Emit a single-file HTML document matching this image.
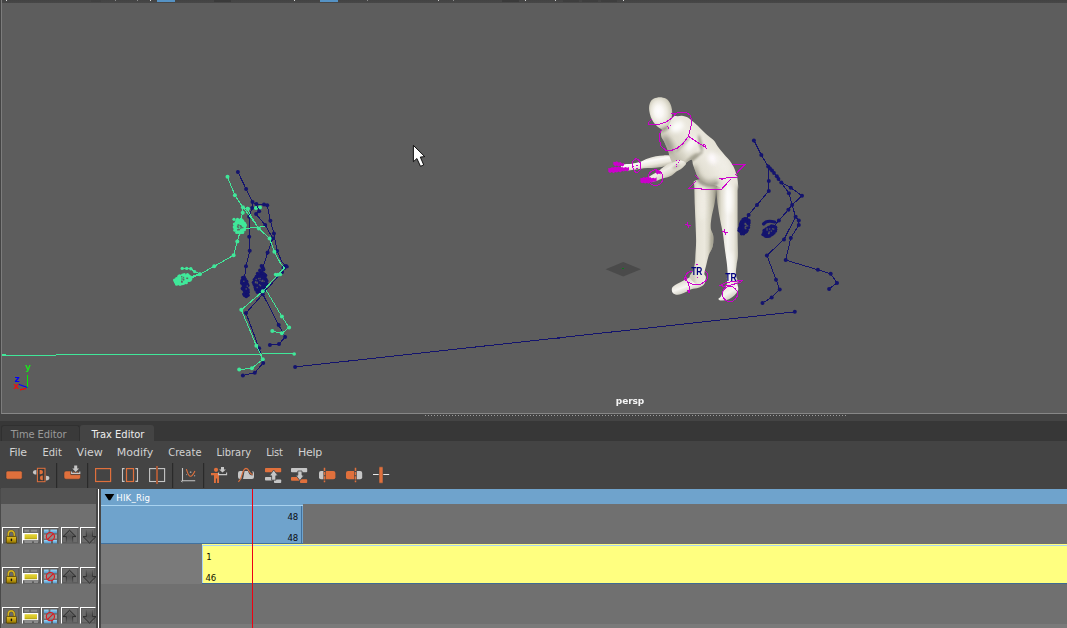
<!DOCTYPE html>
<html>
<head>
<meta charset="utf-8">
<title>Maya - Trax Editor</title>
<style>
html,body{margin:0;padding:0;background:#444;}
body{width:1067px;height:628px;position:relative;overflow:hidden;font-family:"DejaVu Sans Condensed","DejaVu Sans","Liberation Sans",sans-serif;}
.abs{position:absolute;}
#viewport{left:1px;top:0;width:1066px;height:414px;box-sizing:border-box;border-left:1px solid #7c7c7c;border-bottom:1px solid #878787;background:#5d5d5d;}
#vp-top{left:2px;top:0;width:1065px;height:3px;background:linear-gradient(#434343,#474747);}
#scene{left:0;top:0;opacity:0.999;}
#persp{left:616px;top:394px;font:bold 9px "DejaVu Sans","Liberation Sans",sans-serif;color:#fff;line-height:12px;text-shadow:0 0 1px #555;white-space:nowrap;}
#gap{left:0;top:414px;width:1067px;height:7px;background:#444;}
#handle{left:425px;top:415px;width:423px;height:1px;background:repeating-linear-gradient(90deg,#9c9c9c 0 1px,transparent 1px 3px);}
#tabbar{left:0;top:421px;width:1067px;height:20px;background:#373737;}
.tab{top:425px;height:16px;border-radius:3px 3px 0 0;}
.tt{font-size:11px;line-height:13px;white-space:nowrap;}
#tab1{left:1px;width:79px;background:#3a3a3a;border:1px solid #303030;border-bottom:none;box-sizing:border-box;}
#tab2{left:80px;width:74px;background:#444;}
#menubar{left:0;top:441px;width:1067px;height:21px;background:#444;}
.mi{top:445px;font-size:11px;line-height:13px;color:#d6d6d6;white-space:nowrap;}
#toolbar{left:0;top:462px;width:1067px;height:27px;background:#444;}
#trax{left:0;top:489px;width:1067px;height:139px;background:#707070;}
.t9{font-size:9px;line-height:11px;white-space:nowrap;font-family:"DejaVu Sans","Liberation Sans",sans-serif;}
.btn{height:17px;box-sizing:border-box;background:#6b6b6b;border-top:1px solid #fff;border-left:1px solid #fff;border-right:1px solid #646464;border-bottom:1px solid #646464;box-shadow:inset 0 0 0 1px #5c5c5c;}
</style>
</head>
<body>
<div id="viewport" class="abs"></div>
<div id="vp-top" class="abs"></div>
<div class="abs" style="left:157px;top:0;width:18px;height:2px;background:#5592c4"></div><div class="abs" style="left:320px;top:0;width:18px;height:2px;background:#5592c4"></div><div class="abs" style="left:91px;top:0;width:10px;height:2px;background:#404040"></div><div class="abs" style="left:214px;top:0;width:17px;height:2px;background:#3a3a3a"></div><div class="abs" style="left:502px;top:0;width:17px;height:2px;background:#3a3a3a"></div><div class="abs" style="left:563px;top:0;width:16px;height:2px;background:#3e3e3e"></div><div class="abs" style="left:582px;top:0;width:16px;height:2px;background:#3e3e3e"></div><div class="abs" style="left:601px;top:0;width:16px;height:2px;background:#3e3e3e"></div><div class="abs" style="left:6px;top:0;width:1px;height:1px;background:#e0e0e0"></div><div class="abs" style="left:115px;top:0;width:1px;height:1px;background:#8a8a8a"></div><div class="abs" style="left:137px;top:0;width:1px;height:1px;background:#8a8a8a"></div><div class="abs" style="left:150px;top:0;width:1px;height:1px;background:#d8d8d8"></div><div class="abs" style="left:294px;top:0;width:1px;height:1px;background:#d8d8d8"></div><div class="abs" style="left:367px;top:0;width:1px;height:1px;background:#8a8a8a"></div><div class="abs" style="left:438px;top:0;width:1px;height:1px;background:#c8c8c8"></div><div class="abs" style="left:453px;top:0;width:1px;height:1px;background:#8a8a8a"></div><div class="abs" style="left:525px;top:0;width:1px;height:1px;background:#d0d0d0"></div><div class="abs" style="left:555px;top:0;width:1px;height:1px;background:#c8c8c8"></div><div class="abs" style="left:623px;top:0;width:1px;height:1px;background:#d8d8d8"></div>
<svg id="scene" class="abs" width="1067" height="413" viewBox="0 0 1067 413">

<defs>
<radialGradient id="gHead" gradientUnits="userSpaceOnUse" cx="0" cy="0" r="1" fx="-0.12" fy="-0.08" gradientTransform="translate(660,112.5) rotate(-6) scale(13.5,19)">
<stop offset="0" stop-color="#fffdff"/><stop offset="0.3" stop-color="#faf8f5"/><stop offset="0.58" stop-color="#ebe8de"/><stop offset="0.82" stop-color="#d4d1c2"/><stop offset="1" stop-color="#b0ad9d"/>
</radialGradient>
<linearGradient id="gTorso" gradientUnits="userSpaceOnUse" x1="684" y1="168" x2="724" y2="136">
<stop offset="0" stop-color="#c4c1b1"/><stop offset="0.2" stop-color="#e0ddd0"/><stop offset="0.5" stop-color="#eeebe2"/><stop offset="0.8" stop-color="#e4e1d5"/><stop offset="1" stop-color="#c2bfaf"/>
</linearGradient>
<linearGradient id="gLegL" gradientUnits="userSpaceOnUse" x1="694" y1="0" x2="715" y2="0">
<stop offset="0" stop-color="#cfccbd"/><stop offset="0.15" stop-color="#e6e3d7"/><stop offset="0.5" stop-color="#ebe8dd"/><stop offset="0.72" stop-color="#d6d3c4"/><stop offset="1" stop-color="#a9a695"/>
</linearGradient>
<linearGradient id="gLegR" gradientUnits="userSpaceOnUse" x1="717" y1="0" x2="738.5" y2="0">
<stop offset="0" stop-color="#b4b1a0"/><stop offset="0.22" stop-color="#e2dfd2"/><stop offset="0.5" stop-color="#f7f5f2"/><stop offset="0.78" stop-color="#e9e6db"/><stop offset="1" stop-color="#c4c1b1"/>
</linearGradient>
<linearGradient id="gArm1" gradientUnits="userSpaceOnUse" x1="654" y1="155" x2="656.5" y2="168.5">
<stop offset="0" stop-color="#d4d1c2"/><stop offset="0.35" stop-color="#fbfaf8"/><stop offset="0.65" stop-color="#ece9df"/><stop offset="1" stop-color="#b1ae9d"/>
</linearGradient>
<linearGradient id="gArm2" gradientUnits="userSpaceOnUse" x1="662" y1="166" x2="669" y2="179">
<stop offset="0" stop-color="#d8d5c7"/><stop offset="0.35" stop-color="#f1efe7"/><stop offset="0.7" stop-color="#dbd8ca"/><stop offset="1" stop-color="#a9a695"/>
</linearGradient>
<linearGradient id="gUArm" gradientUnits="userSpaceOnUse" x1="668" y1="148" x2="694" y2="156">
<stop offset="0" stop-color="#d9d6c8"/><stop offset="0.3" stop-color="#f6f4ef"/><stop offset="0.65" stop-color="#e6e3d7"/><stop offset="1" stop-color="#b9b6a6"/>
</linearGradient>
<linearGradient id="gFootL" gradientUnits="userSpaceOnUse" x1="684" y1="279" x2="690" y2="295">
<stop offset="0" stop-color="#dad7c9"/><stop offset="0.45" stop-color="#f8f6f2"/><stop offset="1" stop-color="#b8b5a4"/>
</linearGradient>
<linearGradient id="gFootR" gradientUnits="userSpaceOnUse" x1="724" y1="284" x2="734" y2="301">
<stop offset="0" stop-color="#e2dfd3"/><stop offset="0.5" stop-color="#f6f4ef"/><stop offset="1" stop-color="#b8b5a4"/>
</linearGradient>
<filter id="soft" x="-10%" y="-10%" width="120%" height="120%"><feGaussianBlur stdDeviation="0.3"/></filter>
<filter id="blur1" x="-40%" y="-40%" width="180%" height="180%"><feGaussianBlur stdDeviation="1.1"/></filter>
<filter id="blur2" x="-40%" y="-40%" width="180%" height="180%"><feGaussianBlur stdDeviation="2"/></filter>
<linearGradient id="gFade" gradientUnits="userSpaceOnUse" x1="0" y1="181" x2="0" y2="197"><stop offset="0" stop-color="#fff" stop-opacity="0"/><stop offset="1" stop-color="#fff" stop-opacity="1"/></linearGradient>
<mask id="mTorso" maskUnits="userSpaceOnUse" x="640" y="100" width="110" height="110"><rect x="640" y="100" width="110" height="110" fill="#fff"/><ellipse cx="730" cy="190.5" rx="10.5" ry="8" fill="#000" filter="url(#blur2)"/></mask>
<clipPath id="cBody"><path d="M662.0,129.0 C663.1,126.6 666.1,124.1 668.0,122.0 C669.9,119.9 671.9,117.5 673.5,116.5 C675.1,115.5 676.1,116.3 677.5,116.2 C678.9,116.1 680.4,115.7 681.9,115.8 C683.4,115.9 685.1,116.3 686.7,117.0 C688.3,117.7 689.5,118.8 691.4,120.2 C693.2,121.7 695.4,123.5 697.8,125.7 C700.2,128.0 703.1,131.3 705.8,133.7 C708.4,136.1 711.7,138.2 713.7,140.3 C715.7,142.4 716.0,144.1 717.8,146.4 C719.5,148.8 722.2,152.0 724.2,154.4 C726.2,156.8 728.2,158.6 729.8,160.7 C731.4,162.8 732.7,165.0 733.7,167.1 C734.8,169.2 735.5,171.2 736.1,173.5 C736.8,175.8 737.4,178.2 737.6,180.9 C737.9,183.7 739.2,188.3 737.6,190.0 C736.0,191.7 731.4,191.7 728.0,191.0 C724.6,190.3 719.7,187.0 717.2,186.0 C714.7,185.0 714.6,185.2 713.0,185.0 C711.4,184.8 709.4,185.5 707.5,185.0 C705.6,184.5 703.5,183.2 701.9,181.9 C700.3,180.6 699.0,178.8 697.9,177.1 C696.8,175.4 696.3,173.5 695.5,171.5 C694.7,169.5 693.8,167.1 693.1,165.1 C692.4,163.1 692.8,159.8 691.5,159.5 C690.2,159.2 687.3,162.0 685.5,163.3 C683.7,164.6 681.9,166.4 680.5,167.3 C679.1,168.2 678.3,169.2 677.0,168.5 C675.7,167.8 673.8,165.0 672.5,163.0 C671.2,161.0 670.2,158.4 669.5,156.5 C668.8,154.6 669.2,153.8 668.3,151.4 C667.4,149.0 665.5,144.4 664.3,141.9 C663.1,139.4 661.6,138.5 661.2,136.3 C660.8,134.2 660.9,131.4 662.0,129.0Z"/><path d="M676.0,156.3 C674.8,155.4 672.0,155.8 670.0,155.6 C668.0,155.4 666.1,155.3 663.7,155.4 C661.3,155.5 658.4,155.7 655.8,156.2 C653.1,156.7 650.5,157.5 647.8,158.5 C645.1,159.5 642.4,161.2 639.8,162.1 C637.1,163.0 634.4,163.3 631.9,163.7 C629.4,164.0 626.8,163.8 625.0,164.2 C623.2,164.6 621.4,165.1 621.0,166.0 C620.6,166.9 621.4,168.8 622.5,169.5 C623.6,170.2 626.3,170.4 627.9,170.5 C629.5,170.6 629.9,170.4 631.9,170.1 C633.9,169.8 637.1,169.2 639.8,168.9 C642.4,168.6 645.1,168.3 647.8,168.1 C650.5,167.9 653.1,168.0 655.8,167.7 C658.4,167.4 660.8,167.2 663.7,166.5 C666.6,165.8 671.1,164.5 673.3,163.6 C675.5,162.7 676.5,162.2 677.0,161.0 C677.5,159.8 677.2,157.2 676.0,156.3Z"/><path d="M679.0,160.0 C677.0,159.8 676.0,161.4 674.1,162.1 C672.2,162.8 669.7,163.1 667.7,164.1 C665.7,165.1 663.8,166.9 662.2,168.1 C660.6,169.3 659.8,170.2 658.2,171.3 C656.6,172.4 654.1,173.5 652.5,174.5 C650.9,175.5 649.2,176.5 648.5,177.5 C647.8,178.5 647.7,179.8 648.3,180.5 C648.9,181.2 650.5,181.5 652.0,181.6 C653.5,181.7 655.3,181.3 657.0,180.8 C658.7,180.3 660.8,179.1 662.2,178.6 C663.6,178.1 663.7,178.3 665.3,177.8 C666.9,177.3 669.8,176.5 671.7,175.4 C673.6,174.3 674.8,172.7 676.5,171.5 C678.2,170.3 680.4,169.6 682.0,168.2 C683.6,166.8 686.5,164.4 686.0,163.0 C685.5,161.6 681.0,160.2 679.0,160.0Z"/><path d="M694.4,181.0 C692.8,182.2 694.2,182.3 694.3,186.4 C694.4,190.5 694.6,199.3 694.8,205.5 C695.0,211.7 695.3,217.4 695.5,223.3 C695.7,229.2 696.1,235.8 696.1,241.1 C696.1,246.4 695.6,251.3 695.4,255.0 C695.2,258.6 695.3,260.4 694.9,263.0 C694.5,265.6 693.8,268.5 692.9,270.9 C692.0,273.3 689.0,275.1 689.7,277.3 C690.4,279.5 694.5,283.7 697.0,284.0 C699.5,284.3 703.6,280.7 704.8,278.9 C706.0,277.1 704.1,275.7 704.4,273.3 C704.7,270.9 705.7,267.7 706.4,264.6 C707.1,261.6 707.8,258.1 708.8,255.0 C709.8,251.9 712.0,249.4 712.7,246.2 C713.5,243.0 713.6,239.0 713.3,236.0 C713.0,233.0 711.1,231.4 710.8,228.4 C710.5,225.4 710.8,222.4 711.4,218.2 C712.0,213.9 713.9,207.6 714.6,202.9 C715.4,198.2 715.8,193.5 715.9,190.2 C716.0,186.9 717.0,184.9 715.0,183.0 C713.0,181.1 707.4,179.3 704.0,179.0 C700.6,178.7 696.0,179.8 694.4,181.0Z"/><path d="M716.5,186.0 C715.6,188.4 716.4,189.4 716.6,192.7 C716.8,195.9 717.2,200.8 717.8,205.5 C718.4,210.2 719.4,216.1 720.3,220.8 C721.1,225.5 722.1,228.8 722.9,233.5 C723.6,238.2 724.3,245.1 724.8,248.8 C725.3,252.6 725.5,253.6 725.8,256.0 C726.1,258.4 726.5,260.2 726.8,263.0 C727.1,265.8 727.5,269.2 727.6,272.5 C727.7,275.8 726.1,281.2 727.6,283.0 C729.1,284.8 735.3,284.6 736.7,283.0 C738.1,281.4 735.9,276.4 735.9,273.3 C735.9,270.2 736.4,267.7 736.7,264.6 C737.0,261.6 737.8,260.2 737.9,255.0 C738.0,249.8 737.6,239.6 737.6,233.5 C737.6,227.4 737.6,225.0 737.6,218.2 C737.6,211.4 737.6,198.7 737.6,192.7 C737.6,186.7 737.9,185.1 737.6,182.0 C737.3,178.9 737.3,175.7 736.0,174.0 C734.7,172.3 732.3,171.3 730.0,172.0 C727.7,172.7 724.2,175.7 722.0,178.0 C719.8,180.3 717.4,183.6 716.5,186.0Z"/><path d="M691.0,275.0 C688.5,275.4 691.4,276.1 689.7,277.3 C688.0,278.5 683.5,280.6 680.9,282.1 C678.2,283.6 675.3,284.9 673.8,286.1 C672.3,287.3 671.9,288.1 671.8,289.3 C671.7,290.5 672.0,292.3 673.0,293.2 C674.0,294.1 675.7,294.9 677.7,294.8 C679.7,294.7 682.6,293.4 684.9,292.5 C687.2,291.6 689.0,290.1 691.3,289.3 C693.6,288.5 696.5,288.4 698.5,287.7 C700.5,287.0 702.1,286.4 703.2,285.3 C704.3,284.2 705.0,283.0 705.2,281.3 C705.4,279.6 706.9,276.1 704.5,275.0 C702.1,273.9 693.5,274.6 691.0,275.0Z"/><path d="M727.4,278.0 C725.9,278.6 727.8,280.1 727.6,281.3 C727.4,282.5 727.0,283.9 726.4,285.3 C725.8,286.8 724.9,288.1 724.0,290.0 C723.1,291.9 721.7,294.9 720.8,296.4 C719.9,297.9 718.4,298.1 718.4,298.8 C718.4,299.5 719.0,300.3 720.5,300.5 C722.0,300.7 725.5,300.4 727.5,299.8 C729.5,299.2 731.0,298.1 732.5,297.0 C734.0,295.9 735.3,294.5 736.3,293.2 C737.3,291.9 738.1,290.8 738.3,289.3 C738.5,287.9 737.8,286.4 737.5,284.5 C737.2,282.6 738.1,279.1 736.4,278.0 C734.7,276.9 728.9,277.4 727.4,278.0Z"/><path d="M659.9,97.2 C657.9,97.2 655.5,97.8 653.9,98.6 C652.3,99.4 651.1,100.7 650.3,102.2 C649.5,103.7 649.2,105.5 649.1,107.5 C649.0,109.5 649.4,111.9 649.9,113.9 C650.4,115.9 651.1,117.9 651.9,119.5 C652.7,121.1 653.6,122.4 654.7,123.7 C655.8,125.0 657.4,126.6 658.7,127.6 C660.0,128.6 661.5,129.5 662.7,129.6 C663.9,129.7 664.9,129.3 665.9,128.4 C666.9,127.5 668.1,125.9 669.0,124.3 C669.9,122.7 670.9,120.7 671.4,118.7 C671.9,116.7 672.2,114.3 672.2,112.3 C672.2,110.3 671.9,108.4 671.4,106.7 C670.9,105.0 670.3,103.3 669.4,102.0 C668.5,100.7 667.5,99.4 665.9,98.6 C664.3,97.8 661.9,97.2 659.9,97.2Z"/></clipPath>
</defs>

<g filter="url(#soft)">
<path d="M676.0,156.3 C674.8,155.4 672.0,155.8 670.0,155.6 C668.0,155.4 666.1,155.3 663.7,155.4 C661.3,155.5 658.4,155.7 655.8,156.2 C653.1,156.7 650.5,157.5 647.8,158.5 C645.1,159.5 642.4,161.2 639.8,162.1 C637.1,163.0 634.4,163.3 631.9,163.7 C629.4,164.0 626.8,163.8 625.0,164.2 C623.2,164.6 621.4,165.1 621.0,166.0 C620.6,166.9 621.4,168.8 622.5,169.5 C623.6,170.2 626.3,170.4 627.9,170.5 C629.5,170.6 629.9,170.4 631.9,170.1 C633.9,169.8 637.1,169.2 639.8,168.9 C642.4,168.6 645.1,168.3 647.8,168.1 C650.5,167.9 653.1,168.0 655.8,167.7 C658.4,167.4 660.8,167.2 663.7,166.5 C666.6,165.8 671.1,164.5 673.3,163.6 C675.5,162.7 676.5,162.2 677.0,161.0 C677.5,159.8 677.2,157.2 676.0,156.3Z" fill="url(#gArm1)"/>
<path d="M691.0,275.0 C688.5,275.4 691.4,276.1 689.7,277.3 C688.0,278.5 683.5,280.6 680.9,282.1 C678.2,283.6 675.3,284.9 673.8,286.1 C672.3,287.3 671.9,288.1 671.8,289.3 C671.7,290.5 672.0,292.3 673.0,293.2 C674.0,294.1 675.7,294.9 677.7,294.8 C679.7,294.7 682.6,293.4 684.9,292.5 C687.2,291.6 689.0,290.1 691.3,289.3 C693.6,288.5 696.5,288.4 698.5,287.7 C700.5,287.0 702.1,286.4 703.2,285.3 C704.3,284.2 705.0,283.0 705.2,281.3 C705.4,279.6 706.9,276.1 704.5,275.0 C702.1,273.9 693.5,274.6 691.0,275.0Z" fill="url(#gFootL)"/>
<path d="M694.4,181.0 C692.8,182.2 694.2,182.3 694.3,186.4 C694.4,190.5 694.6,199.3 694.8,205.5 C695.0,211.7 695.3,217.4 695.5,223.3 C695.7,229.2 696.1,235.8 696.1,241.1 C696.1,246.4 695.6,251.3 695.4,255.0 C695.2,258.6 695.3,260.4 694.9,263.0 C694.5,265.6 693.8,268.5 692.9,270.9 C692.0,273.3 689.0,275.1 689.7,277.3 C690.4,279.5 694.5,283.7 697.0,284.0 C699.5,284.3 703.6,280.7 704.8,278.9 C706.0,277.1 704.1,275.7 704.4,273.3 C704.7,270.9 705.7,267.7 706.4,264.6 C707.1,261.6 707.8,258.1 708.8,255.0 C709.8,251.9 712.0,249.4 712.7,246.2 C713.5,243.0 713.6,239.0 713.3,236.0 C713.0,233.0 711.1,231.4 710.8,228.4 C710.5,225.4 710.8,222.4 711.4,218.2 C712.0,213.9 713.9,207.6 714.6,202.9 C715.4,198.2 715.8,193.5 715.9,190.2 C716.0,186.9 717.0,184.9 715.0,183.0 C713.0,181.1 707.4,179.3 704.0,179.0 C700.6,178.7 696.0,179.8 694.4,181.0Z" fill="url(#gLegL)"/>
<path d="M727.4,278.0 C725.9,278.6 727.8,280.1 727.6,281.3 C727.4,282.5 727.0,283.9 726.4,285.3 C725.8,286.8 724.9,288.1 724.0,290.0 C723.1,291.9 721.7,294.9 720.8,296.4 C719.9,297.9 718.4,298.1 718.4,298.8 C718.4,299.5 719.0,300.3 720.5,300.5 C722.0,300.7 725.5,300.4 727.5,299.8 C729.5,299.2 731.0,298.1 732.5,297.0 C734.0,295.9 735.3,294.5 736.3,293.2 C737.3,291.9 738.1,290.8 738.3,289.3 C738.5,287.9 737.8,286.4 737.5,284.5 C737.2,282.6 738.1,279.1 736.4,278.0 C734.7,276.9 728.9,277.4 727.4,278.0Z" fill="url(#gFootR)"/>
<path d="M716.5,186.0 C715.6,188.4 716.4,189.4 716.6,192.7 C716.8,195.9 717.2,200.8 717.8,205.5 C718.4,210.2 719.4,216.1 720.3,220.8 C721.1,225.5 722.1,228.8 722.9,233.5 C723.6,238.2 724.3,245.1 724.8,248.8 C725.3,252.6 725.5,253.6 725.8,256.0 C726.1,258.4 726.5,260.2 726.8,263.0 C727.1,265.8 727.5,269.2 727.6,272.5 C727.7,275.8 726.1,281.2 727.6,283.0 C729.1,284.8 735.3,284.6 736.7,283.0 C738.1,281.4 735.9,276.4 735.9,273.3 C735.9,270.2 736.4,267.7 736.7,264.6 C737.0,261.6 737.8,260.2 737.9,255.0 C738.0,249.8 737.6,239.6 737.6,233.5 C737.6,227.4 737.6,225.0 737.6,218.2 C737.6,211.4 737.6,198.7 737.6,192.7 C737.6,186.7 737.9,185.1 737.6,182.0 C737.3,178.9 737.3,175.7 736.0,174.0 C734.7,172.3 732.3,171.3 730.0,172.0 C727.7,172.7 724.2,175.7 722.0,178.0 C719.8,180.3 717.4,183.6 716.5,186.0Z" fill="url(#gLegR)"/>
<path d="M662.0,129.0 C663.1,126.6 666.1,124.1 668.0,122.0 C669.9,119.9 671.9,117.5 673.5,116.5 C675.1,115.5 676.1,116.3 677.5,116.2 C678.9,116.1 680.4,115.7 681.9,115.8 C683.4,115.9 685.1,116.3 686.7,117.0 C688.3,117.7 689.5,118.8 691.4,120.2 C693.2,121.7 695.4,123.5 697.8,125.7 C700.2,128.0 703.1,131.3 705.8,133.7 C708.4,136.1 711.7,138.2 713.7,140.3 C715.7,142.4 716.0,144.1 717.8,146.4 C719.5,148.8 722.2,152.0 724.2,154.4 C726.2,156.8 728.2,158.6 729.8,160.7 C731.4,162.8 732.7,165.0 733.7,167.1 C734.8,169.2 735.5,171.2 736.1,173.5 C736.8,175.8 737.4,178.2 737.6,180.9 C737.9,183.7 739.2,188.3 737.6,190.0 C736.0,191.7 731.4,191.7 728.0,191.0 C724.6,190.3 719.7,187.0 717.2,186.0 C714.7,185.0 714.6,185.2 713.0,185.0 C711.4,184.8 709.4,185.5 707.5,185.0 C705.6,184.5 703.5,183.2 701.9,181.9 C700.3,180.6 699.0,178.8 697.9,177.1 C696.8,175.4 696.3,173.5 695.5,171.5 C694.7,169.5 693.8,167.1 693.1,165.1 C692.4,163.1 692.8,159.8 691.5,159.5 C690.2,159.2 687.3,162.0 685.5,163.3 C683.7,164.6 681.9,166.4 680.5,167.3 C679.1,168.2 678.3,169.2 677.0,168.5 C675.7,167.8 673.8,165.0 672.5,163.0 C671.2,161.0 670.2,158.4 669.5,156.5 C668.8,154.6 669.2,153.8 668.3,151.4 C667.4,149.0 665.5,144.4 664.3,141.9 C663.1,139.4 661.6,138.5 661.2,136.3 C660.8,134.2 660.9,131.4 662.0,129.0Z" fill="url(#gTorso)" mask="url(#mTorso)"/>
<path d="M679.0,160.0 C677.0,159.8 676.0,161.4 674.1,162.1 C672.2,162.8 669.7,163.1 667.7,164.1 C665.7,165.1 663.8,166.9 662.2,168.1 C660.6,169.3 659.8,170.2 658.2,171.3 C656.6,172.4 654.1,173.5 652.5,174.5 C650.9,175.5 649.2,176.5 648.5,177.5 C647.8,178.5 647.7,179.8 648.3,180.5 C648.9,181.2 650.5,181.5 652.0,181.6 C653.5,181.7 655.3,181.3 657.0,180.8 C658.7,180.3 660.8,179.1 662.2,178.6 C663.6,178.1 663.7,178.3 665.3,177.8 C666.9,177.3 669.8,176.5 671.7,175.4 C673.6,174.3 674.8,172.7 676.5,171.5 C678.2,170.3 680.4,169.6 682.0,168.2 C683.6,166.8 686.5,164.4 686.0,163.0 C685.5,161.6 681.0,160.2 679.0,160.0Z" fill="url(#gArm2)"/>
<path d="M659.9,97.2 C657.9,97.2 655.5,97.8 653.9,98.6 C652.3,99.4 651.1,100.7 650.3,102.2 C649.5,103.7 649.2,105.5 649.1,107.5 C649.0,109.5 649.4,111.9 649.9,113.9 C650.4,115.9 651.1,117.9 651.9,119.5 C652.7,121.1 653.6,122.4 654.7,123.7 C655.8,125.0 657.4,126.6 658.7,127.6 C660.0,128.6 661.5,129.5 662.7,129.6 C663.9,129.7 664.9,129.3 665.9,128.4 C666.9,127.5 668.1,125.9 669.0,124.3 C669.9,122.7 670.9,120.7 671.4,118.7 C671.9,116.7 672.2,114.3 672.2,112.3 C672.2,110.3 671.9,108.4 671.4,106.7 C670.9,105.0 670.3,103.3 669.4,102.0 C668.5,100.7 667.5,99.4 665.9,98.6 C664.3,97.8 661.9,97.2 659.9,97.2Z" fill="url(#gHead)"/>
</g>
<g clip-path="url(#cBody)">
<ellipse cx="677" cy="127" rx="7" ry="5" fill="#ffffff" opacity="0.9" filter="url(#blur2)" transform="rotate(-30 677 127)"/>
<ellipse cx="690.5" cy="145" rx="3.5" ry="8" fill="#ffffff" opacity="0.75" filter="url(#blur2)" transform="rotate(28 690.5 145)"/>
<ellipse cx="713" cy="158.5" rx="4.5" ry="6" fill="#fffbff" opacity="0.95" filter="url(#blur2)" transform="rotate(-30 713 158.5)"/>
<ellipse cx="729" cy="200" rx="3" ry="14" fill="#ffffff" opacity="0.85" filter="url(#blur2)" transform="rotate(0 729 200)"/>
<ellipse cx="731" cy="265" rx="2.5" ry="14" fill="#ffffff" opacity="0.6" filter="url(#blur2)" transform="rotate(0 731 265)"/>
<ellipse cx="702" cy="205" rx="4" ry="16" fill="#f3f0e8" opacity="0.6" filter="url(#blur2)" transform="rotate(0 702 205)"/>
<ellipse cx="700.5" cy="143.5" rx="1.6" ry="9" fill="#8f8c7c" opacity="0.75" filter="url(#blur1)" transform="rotate(-12 700.5 143.5)"/>
<ellipse cx="692" cy="158" rx="8" ry="2.2" fill="#9a9786" opacity="0.7" filter="url(#blur1)" transform="rotate(-38 692 158)"/>
<ellipse cx="668" cy="144.5" rx="4.2" ry="9.5" fill="#98958a" opacity="0.85" filter="url(#blur2)" transform="rotate(-24 668 144.5)"/>
<path d="M676.5,151.5 L689,138.2" fill="none" stroke="#8a8777" stroke-width="1.8" opacity="0.5" filter="url(#blur1)"/>
<ellipse cx="723" cy="163" rx="6" ry="11" fill="#f4f2ec" opacity="0.6" filter="url(#blur2)" transform="rotate(-35 723 163)"/>
<path d="M694,166 Q696.5,180.5 706,183.2 Q713,184.6 718,181" fill="none" stroke="#8a8777" stroke-width="5" opacity="0.62" filter="url(#blur2)"/>
<path d="M697,178 Q701,184.6 708,185.2 Q713.5,185.6 717.5,183" fill="none" stroke="#77746a" stroke-width="1.6" opacity="0.7" filter="url(#blur1)"/>
<path d="M691.5,160.5 L702,152" fill="none" stroke="#8a8777" stroke-width="2.4" opacity="0.6" filter="url(#blur1)"/>
<ellipse cx="716.2" cy="197" rx="1.3" ry="9" fill="#8a8777" opacity="0.6" filter="url(#blur1)" transform="rotate(3 716.2 197)"/>
<ellipse cx="712.5" cy="245" rx="2.5" ry="20" fill="#a19e8d" opacity="0.7" filter="url(#blur1)" transform="rotate(2 712.5 245)"/>
<ellipse cx="664" cy="129.5" rx="5" ry="2" fill="#8f8c7c" opacity="0.7" filter="url(#blur1)" transform="rotate(-25 664 129.5)"/>
<ellipse cx="676" cy="166.5" rx="4" ry="1.5" fill="#a5a291" opacity="0.6" filter="url(#blur1)" transform="rotate(-30 676 166.5)"/>
</g>
<polyline points="247.7,208.8 256.0,208.0 260.0,207.6" fill="none" stroke="#40e89a" stroke-width="1.0" shape-rendering="crispEdges"/><circle cx="247.7" cy="208.8" r="2.0" fill="#40e89a"/><circle cx="256.0" cy="208.0" r="2.0" fill="#40e89a"/><circle cx="260.0" cy="207.6" r="2.0" fill="#40e89a"/>
<polyline points="237.9,172.0 246.1,188.9 252.5,202.1 256.4,204.0 264.0,204.6 267.2,205.2 270.4,220.8 273.9,233.5 277.1,251.0 282.0,262.0 286.0,266.0 281.9,271.9" fill="none" stroke="#14146e" stroke-width="1.0" shape-rendering="crispEdges"/><circle cx="237.9" cy="172.0" r="2.0" fill="#14146e"/><circle cx="246.1" cy="188.9" r="2.0" fill="#14146e"/><circle cx="252.5" cy="202.1" r="2.0" fill="#14146e"/><circle cx="256.4" cy="204.0" r="2.0" fill="#14146e"/><circle cx="264.0" cy="204.6" r="2.0" fill="#14146e"/><circle cx="267.2" cy="205.2" r="2.0" fill="#14146e"/><circle cx="270.4" cy="220.8" r="2.0" fill="#14146e"/><circle cx="273.9" cy="233.5" r="2.0" fill="#14146e"/><circle cx="277.1" cy="251.0" r="2.0" fill="#14146e"/><circle cx="286.0" cy="266.0" r="2.0" fill="#14146e"/><circle cx="281.9" cy="271.9" r="2.0" fill="#14146e"/>
<polyline points="252.5,202.1 252.1,208.0 249.2,216.8 249.2,236.7 249.7,250.7 246.0,266.3 244.5,278.0" fill="none" stroke="#14146e" stroke-width="1.0" shape-rendering="crispEdges"/><circle cx="252.1" cy="208.0" r="2.0" fill="#14146e"/><circle cx="249.2" cy="216.8" r="2.0" fill="#14146e"/><circle cx="249.2" cy="236.7" r="2.0" fill="#14146e"/><circle cx="249.7" cy="250.7" r="2.0" fill="#14146e"/><circle cx="246.0" cy="266.3" r="2.0" fill="#14146e"/>
<polyline points="256.4,204.0 259.1,211.2 256.1,214.1 265.2,225.1 272.8,238.3 267.6,252.6 262.8,267.9 262.0,276.0" fill="none" stroke="#14146e" stroke-width="1.0" shape-rendering="crispEdges"/><circle cx="259.1" cy="211.2" r="2.0" fill="#14146e"/><circle cx="256.1" cy="214.1" r="2.0" fill="#14146e"/><circle cx="265.2" cy="225.1" r="2.0" fill="#14146e"/><circle cx="272.8" cy="238.3" r="2.0" fill="#14146e"/><circle cx="267.6" cy="252.6" r="2.0" fill="#14146e"/><circle cx="262.8" cy="267.9" r="2.0" fill="#14146e"/>
<polyline points="281.9,271.9 262.8,294.2 246.0,313.0 259.1,348.3 263.2,362.9 254.8,372.8 242.9,375.4" fill="none" stroke="#14146e" stroke-width="1.0" shape-rendering="crispEdges"/><circle cx="281.9" cy="271.9" r="2.0" fill="#14146e"/><circle cx="262.8" cy="294.2" r="2.0" fill="#14146e"/><circle cx="246.0" cy="313.0" r="2.0" fill="#14146e"/><circle cx="259.1" cy="348.3" r="2.0" fill="#14146e"/><circle cx="263.2" cy="362.9" r="2.0" fill="#14146e"/><circle cx="254.8" cy="372.8" r="2.0" fill="#14146e"/><circle cx="242.9" cy="375.4" r="2.0" fill="#14146e"/>
<polyline points="262.8,294.2 278.7,324.9 285.1,337.0 279.0,344.1 269.9,345.1" fill="none" stroke="#14146e" stroke-width="1.0" shape-rendering="crispEdges"/><circle cx="278.7" cy="324.9" r="2.0" fill="#14146e"/><circle cx="285.1" cy="337.0" r="2.0" fill="#14146e"/><circle cx="279.0" cy="344.1" r="2.0" fill="#14146e"/><circle cx="269.9" cy="345.1" r="2.0" fill="#14146e"/>
<ellipse cx="245" cy="286.8" rx="3.2" ry="11.0" fill="#14146e" transform="rotate(-9 245 286.8)"/><circle cx="247.9" cy="285.4" r="1.7" fill="#14146e"/><circle cx="248.1" cy="289.9" r="1.7" fill="#14146e"/><circle cx="248.2" cy="292.2" r="1.7" fill="#14146e"/><circle cx="248.1" cy="295.2" r="1.7" fill="#14146e"/><circle cx="247.3" cy="294.9" r="1.7" fill="#14146e"/><circle cx="246.3" cy="296.6" r="1.7" fill="#14146e"/><circle cx="245.4" cy="295.2" r="1.7" fill="#14146e"/><circle cx="244.6" cy="295.5" r="1.7" fill="#14146e"/><circle cx="243.7" cy="294.1" r="1.7" fill="#14146e"/><circle cx="242.8" cy="289.1" r="1.7" fill="#14146e"/><circle cx="242.3" cy="288.4" r="1.7" fill="#14146e"/><circle cx="241.8" cy="283.3" r="1.7" fill="#14146e"/><circle cx="241.8" cy="282.0" r="1.7" fill="#14146e"/><circle cx="242.1" cy="280.2" r="1.7" fill="#14146e"/><circle cx="242.6" cy="277.6" r="1.7" fill="#14146e"/><circle cx="243.3" cy="277.5" r="1.7" fill="#14146e"/><circle cx="244.2" cy="277.2" r="1.7" fill="#14146e"/><circle cx="245.2" cy="279.1" r="1.7" fill="#14146e"/><circle cx="246.7" cy="281.2" r="1.7" fill="#14146e"/><circle cx="247.2" cy="283.8" r="1.7" fill="#14146e"/><rect x="246.6" y="285.4" width="1.4" height="1.4" fill="#5d5d5d" opacity="0.8"/><rect x="245.5" y="288.2" width="1.4" height="1.4" fill="#5d5d5d" opacity="0.8"/><rect x="243.1" y="280.6" width="1.4" height="1.4" fill="#5d5d5d" opacity="0.8"/>
<ellipse cx="260.3" cy="282.6" rx="7.0" ry="10.4" fill="#14146e" transform="rotate(4 260.3 282.6)"/><circle cx="267.1" cy="284.2" r="1.7" fill="#14146e"/><circle cx="266.0" cy="284.3" r="1.7" fill="#14146e"/><circle cx="265.4" cy="288.6" r="1.7" fill="#14146e"/><circle cx="264.0" cy="289.6" r="1.7" fill="#14146e"/><circle cx="262.8" cy="291.3" r="1.7" fill="#14146e"/><circle cx="261.1" cy="291.2" r="1.7" fill="#14146e"/><circle cx="259.8" cy="291.8" r="1.7" fill="#14146e"/><circle cx="257.4" cy="292.3" r="1.7" fill="#14146e"/><circle cx="256.0" cy="290.0" r="1.7" fill="#14146e"/><circle cx="255.6" cy="288.8" r="1.7" fill="#14146e"/><circle cx="255.3" cy="287.4" r="1.7" fill="#14146e"/><circle cx="254.2" cy="284.6" r="1.7" fill="#14146e"/><circle cx="253.4" cy="282.4" r="1.7" fill="#14146e"/><circle cx="254.3" cy="279.6" r="1.7" fill="#14146e"/><circle cx="255.4" cy="278.4" r="1.7" fill="#14146e"/><circle cx="256.4" cy="276.4" r="1.7" fill="#14146e"/><circle cx="257.5" cy="273.4" r="1.7" fill="#14146e"/><circle cx="259.6" cy="273.9" r="1.7" fill="#14146e"/><circle cx="261.6" cy="272.7" r="1.7" fill="#14146e"/><circle cx="263.1" cy="273.1" r="1.7" fill="#14146e"/><circle cx="264.6" cy="274.5" r="1.7" fill="#14146e"/><circle cx="265.6" cy="275.4" r="1.7" fill="#14146e"/><circle cx="266.0" cy="279.4" r="1.7" fill="#14146e"/><circle cx="266.9" cy="281.1" r="1.7" fill="#14146e"/><rect x="256.5" y="282.7" width="1.4" height="1.4" fill="#5d5d5d" opacity="0.8"/><rect x="254.8" y="282.0" width="1.4" height="1.4" fill="#5d5d5d" opacity="0.8"/><rect x="255.2" y="281.6" width="1.4" height="1.4" fill="#5d5d5d" opacity="0.8"/><rect x="256.5" y="286.8" width="1.4" height="1.4" fill="#5d5d5d" opacity="0.8"/><rect x="262.0" y="279.7" width="1.4" height="1.4" fill="#5d5d5d" opacity="0.8"/><rect x="255.5" y="278.8" width="1.4" height="1.4" fill="#5d5d5d" opacity="0.8"/><rect x="259.4" y="277.8" width="1.4" height="1.4" fill="#5d5d5d" opacity="0.8"/><rect x="259.8" y="285.0" width="1.4" height="1.4" fill="#5d5d5d" opacity="0.8"/><rect x="259.3" y="279.8" width="1.4" height="1.4" fill="#5d5d5d" opacity="0.8"/><rect x="261.3" y="280.5" width="1.4" height="1.4" fill="#5d5d5d" opacity="0.8"/><rect x="261.5" y="280.4" width="1.4" height="1.4" fill="#5d5d5d" opacity="0.8"/><rect x="263.4" y="280.7" width="1.4" height="1.4" fill="#5d5d5d" opacity="0.8"/><rect x="256.6" y="281.6" width="1.4" height="1.4" fill="#5d5d5d" opacity="0.8"/><rect x="257.9" y="277.9" width="1.4" height="1.4" fill="#5d5d5d" opacity="0.8"/><rect x="258.8" y="284.1" width="1.4" height="1.4" fill="#5d5d5d" opacity="0.8"/><rect x="254.9" y="281.1" width="1.4" height="1.4" fill="#5d5d5d" opacity="0.8"/>
<circle cx="261.5" cy="266.0" r="1.9" fill="#14146e"/><circle cx="263.5" cy="269.5" r="1.9" fill="#14146e"/><circle cx="260.0" cy="270.5" r="1.9" fill="#14146e"/>
<circle cx="284.7" cy="268.2" r="1.6" fill="#14146e"/><circle cx="283.0" cy="267.8" r="1.6" fill="#14146e"/><circle cx="284.1" cy="266.2" r="1.6" fill="#14146e"/><circle cx="287.2" cy="266.7" r="1.6" fill="#14146e"/><circle cx="284.4" cy="267.5" r="1.6" fill="#14146e"/>
<polyline points="295.1,366.9 794.8,311.8" fill="none" stroke="#14146e" stroke-width="1.0" shape-rendering="crispEdges"/><circle cx="295.1" cy="366.9" r="2.0" fill="#14146e"/><circle cx="794.8" cy="311.8" r="2.0" fill="#14146e"/>
<rect x="557" y="337" width="3" height="2" fill="#14146e"/>
<polyline points="227.5,176.8 234.9,195.3 242.9,207.2 247.7,208.8" fill="none" stroke="#40e89a" stroke-width="1.0" shape-rendering="crispEdges"/><circle cx="227.5" cy="176.8" r="2.0" fill="#40e89a"/><circle cx="234.9" cy="195.3" r="2.0" fill="#40e89a"/><circle cx="242.9" cy="207.2" r="2.0" fill="#40e89a"/><circle cx="247.7" cy="208.8" r="2.0" fill="#40e89a"/>
<polyline points="242.9,207.2 242.7,212.8 240.0,221.0" fill="none" stroke="#40e89a" stroke-width="1.0" shape-rendering="crispEdges"/><circle cx="242.7" cy="212.8" r="2.0" fill="#40e89a"/>
<polyline points="240.0,232.0 237.3,241.5 233.6,255.3 214.2,266.3 199.8,274.3 190.0,278.0" fill="none" stroke="#40e89a" stroke-width="1.0" shape-rendering="crispEdges"/><circle cx="237.3" cy="241.5" r="2.0" fill="#40e89a"/><circle cx="233.6" cy="255.3" r="2.0" fill="#40e89a"/><circle cx="214.2" cy="266.3" r="2.0" fill="#40e89a"/><circle cx="199.8" cy="274.3" r="2.0" fill="#40e89a"/>
<polyline points="247.7,208.8 252.0,218.0 258.8,228.4 269.6,238.6 274.4,251.8 280.3,263.0 284.5,268.0 277.9,274.7 262.8,291.3 241.3,309.8 256.4,345.7 262.8,359.3 251.9,368.2 239.2,369.6" fill="none" stroke="#40e89a" stroke-width="1.0" shape-rendering="crispEdges"/><circle cx="258.8" cy="228.4" r="2.0" fill="#40e89a"/><circle cx="269.6" cy="238.6" r="2.0" fill="#40e89a"/><circle cx="274.4" cy="251.8" r="2.0" fill="#40e89a"/><circle cx="277.9" cy="274.7" r="2.0" fill="#40e89a"/><circle cx="262.8" cy="291.3" r="2.0" fill="#40e89a"/><circle cx="241.3" cy="309.8" r="2.0" fill="#40e89a"/><circle cx="256.4" cy="345.7" r="2.0" fill="#40e89a"/><circle cx="262.8" cy="359.3" r="2.0" fill="#40e89a"/><circle cx="251.9" cy="368.2" r="2.0" fill="#40e89a"/><circle cx="239.2" cy="369.6" r="2.0" fill="#40e89a"/>
<polyline points="242.9,207.2 258.8,228.4" fill="none" stroke="#40e89a" stroke-width="1" shape-rendering="crispEdges"/>
<polyline points="245.0,228.5 265.0,226.5" fill="none" stroke="#40e89a" stroke-width="1" shape-rendering="crispEdges"/>
<polyline points="266.0,290.0 281.9,316.5 289.1,327.6 281.9,333.2 272.3,331.1" fill="none" stroke="#40e89a" stroke-width="1.0" shape-rendering="crispEdges"/><circle cx="281.9" cy="316.5" r="2.0" fill="#40e89a"/><circle cx="289.1" cy="327.6" r="2.0" fill="#40e89a"/><circle cx="281.9" cy="333.2" r="2.0" fill="#40e89a"/><circle cx="272.3" cy="331.1" r="2.0" fill="#40e89a"/>
<circle cx="275.5" cy="274.5" r="1.7" fill="#40e89a"/><circle cx="280.5" cy="274.5" r="1.7" fill="#40e89a"/>
<ellipse cx="239.8" cy="226.6" rx="5.8" ry="7.0" fill="#40e89a" transform="rotate(0 239.8 226.6)"/><circle cx="244.7" cy="226.2" r="1.6" fill="#40e89a"/><circle cx="244.6" cy="228.3" r="1.6" fill="#40e89a"/><circle cx="244.4" cy="229.8" r="1.6" fill="#40e89a"/><circle cx="242.7" cy="232.5" r="1.6" fill="#40e89a"/><circle cx="241.1" cy="232.5" r="1.6" fill="#40e89a"/><circle cx="239.8" cy="232.8" r="1.6" fill="#40e89a"/><circle cx="238.6" cy="232.4" r="1.6" fill="#40e89a"/><circle cx="236.7" cy="232.5" r="1.6" fill="#40e89a"/><circle cx="234.9" cy="230.2" r="1.6" fill="#40e89a"/><circle cx="234.9" cy="228.1" r="1.6" fill="#40e89a"/><circle cx="234.3" cy="226.9" r="1.6" fill="#40e89a"/><circle cx="234.4" cy="224.1" r="1.6" fill="#40e89a"/><circle cx="236.1" cy="222.7" r="1.6" fill="#40e89a"/><circle cx="236.7" cy="221.1" r="1.6" fill="#40e89a"/><circle cx="238.3" cy="220.8" r="1.6" fill="#40e89a"/><circle cx="239.8" cy="220.7" r="1.6" fill="#40e89a"/><circle cx="242.1" cy="220.3" r="1.6" fill="#40e89a"/><circle cx="242.9" cy="221.6" r="1.6" fill="#40e89a"/><circle cx="244.5" cy="223.3" r="1.6" fill="#40e89a"/><circle cx="245.4" cy="225.1" r="1.6" fill="#40e89a"/><rect x="236.9" y="225.8" width="1.4" height="1.4" fill="#5d5d5d" opacity="0.8"/><rect x="237.3" y="224.4" width="1.4" height="1.4" fill="#5d5d5d" opacity="0.8"/><rect x="240.1" y="227.7" width="1.4" height="1.4" fill="#5d5d5d" opacity="0.8"/><rect x="239.4" y="225.0" width="1.4" height="1.4" fill="#5d5d5d" opacity="0.8"/><rect x="242.0" y="226.9" width="1.4" height="1.4" fill="#5d5d5d" opacity="0.8"/><rect x="238.6" y="228.9" width="1.4" height="1.4" fill="#5d5d5d" opacity="0.8"/><rect x="237.2" y="226.3" width="1.4" height="1.4" fill="#5d5d5d" opacity="0.8"/><rect x="240.5" y="225.9" width="1.4" height="1.4" fill="#5d5d5d" opacity="0.8"/><rect x="237.9" y="226.8" width="1.4" height="1.4" fill="#5d5d5d" opacity="0.8"/><rect x="238.0" y="224.4" width="1.4" height="1.4" fill="#5d5d5d" opacity="0.8"/><rect x="237.0" y="229.1" width="1.4" height="1.4" fill="#5d5d5d" opacity="0.8"/><rect x="237.9" y="228.8" width="1.4" height="1.4" fill="#5d5d5d" opacity="0.8"/><rect x="240.0" y="225.2" width="1.4" height="1.4" fill="#5d5d5d" opacity="0.8"/><rect x="240.5" y="226.6" width="1.4" height="1.4" fill="#5d5d5d" opacity="0.8"/>
<circle cx="234.0" cy="219.3" r="1.6" fill="#40e89a"/><circle cx="237.5" cy="219.3" r="1.6" fill="#40e89a"/><circle cx="241.0" cy="219.3" r="1.6" fill="#40e89a"/>
<ellipse cx="182.6" cy="279.6" rx="8.8" ry="4.4" fill="#40e89a" transform="rotate(-17 182.6 279.6)"/><circle cx="190.7" cy="277.2" r="1.6" fill="#40e89a"/><circle cx="190.9" cy="278.7" r="1.6" fill="#40e89a"/><circle cx="190.2" cy="280.0" r="1.6" fill="#40e89a"/><circle cx="189.1" cy="280.5" r="1.6" fill="#40e89a"/><circle cx="186.3" cy="282.7" r="1.6" fill="#40e89a"/><circle cx="184.0" cy="283.1" r="1.6" fill="#40e89a"/><circle cx="182.7" cy="283.6" r="1.6" fill="#40e89a"/><circle cx="180.4" cy="284.2" r="1.6" fill="#40e89a"/><circle cx="179.4" cy="283.9" r="1.6" fill="#40e89a"/><circle cx="176.6" cy="284.2" r="1.6" fill="#40e89a"/><circle cx="175.8" cy="282.6" r="1.6" fill="#40e89a"/><circle cx="175.3" cy="281.5" r="1.6" fill="#40e89a"/><circle cx="175.4" cy="280.6" r="1.6" fill="#40e89a"/><circle cx="174.6" cy="280.1" r="1.6" fill="#40e89a"/><circle cx="176.6" cy="278.6" r="1.6" fill="#40e89a"/><circle cx="178.8" cy="276.4" r="1.6" fill="#40e89a"/><circle cx="179.7" cy="275.9" r="1.6" fill="#40e89a"/><circle cx="182.6" cy="275.2" r="1.6" fill="#40e89a"/><circle cx="184.3" cy="274.7" r="1.6" fill="#40e89a"/><circle cx="187.5" cy="274.7" r="1.6" fill="#40e89a"/><circle cx="188.7" cy="275.9" r="1.6" fill="#40e89a"/><circle cx="189.1" cy="276.4" r="1.6" fill="#40e89a"/><rect x="182.9" y="279.2" width="1.4" height="1.4" fill="#5d5d5d" opacity="0.8"/><rect x="181.3" y="281.4" width="1.4" height="1.4" fill="#5d5d5d" opacity="0.8"/><rect x="186.2" y="277.6" width="1.4" height="1.4" fill="#5d5d5d" opacity="0.8"/><rect x="181.0" y="280.5" width="1.4" height="1.4" fill="#5d5d5d" opacity="0.8"/><rect x="182.8" y="276.8" width="1.4" height="1.4" fill="#5d5d5d" opacity="0.8"/><rect x="181.1" y="281.0" width="1.4" height="1.4" fill="#5d5d5d" opacity="0.8"/><rect x="181.3" y="278.3" width="1.4" height="1.4" fill="#5d5d5d" opacity="0.8"/><rect x="182.9" y="278.5" width="1.4" height="1.4" fill="#5d5d5d" opacity="0.8"/><rect x="181.0" y="276.0" width="1.4" height="1.4" fill="#5d5d5d" opacity="0.8"/><rect x="186.8" y="277.7" width="1.4" height="1.4" fill="#5d5d5d" opacity="0.8"/>
<polyline points="182.2,268.4 186.7,268.4 190.8,268.7 194.6,271.6 200.0,274.1" fill="none" stroke="#40e89a" stroke-width="1.0" shape-rendering="crispEdges"/><circle cx="182.2" cy="268.4" r="1.7" fill="#40e89a"/><circle cx="186.7" cy="268.4" r="1.7" fill="#40e89a"/><circle cx="190.8" cy="268.7" r="1.7" fill="#40e89a"/><circle cx="194.6" cy="271.6" r="1.7" fill="#40e89a"/><circle cx="200.0" cy="274.1" r="1.7" fill="#40e89a"/>
<polyline points="192.0,277.0 200.0,274.1" fill="none" stroke="#40e89a" stroke-width="2" shape-rendering="crispEdges"/>
<path d="M2,355.5 H56 M56,354.5 H262 M262,353.5 H294" stroke="#40e89a" stroke-width="1" shape-rendering="crispEdges"/>
<rect x="2" y="354" width="4" height="2" fill="#40e89a"/>
<circle cx="294.2" cy="354.0" r="1.8" fill="#40e89a"/>
<polyline points="753.9,140.4 761.3,155.0 768.2,166.6 772.0,170.6 776.8,176.2 781.3,182.6 790.8,187.7 802.0,195.8 792.1,204.9 788.4,209.7 778.9,220.5 774.0,226.0" fill="none" stroke="#14146e" stroke-width="1.0" shape-rendering="crispEdges"/><circle cx="753.9" cy="140.4" r="2.0" fill="#14146e"/><circle cx="761.3" cy="155.0" r="2.0" fill="#14146e"/><circle cx="768.2" cy="166.6" r="2.0" fill="#14146e"/><circle cx="772.0" cy="170.6" r="2.0" fill="#14146e"/><circle cx="776.8" cy="176.2" r="2.0" fill="#14146e"/><circle cx="781.3" cy="182.6" r="2.0" fill="#14146e"/><circle cx="790.8" cy="187.7" r="2.0" fill="#14146e"/><circle cx="802.0" cy="195.8" r="2.0" fill="#14146e"/><circle cx="792.1" cy="204.9" r="2.0" fill="#14146e"/><circle cx="788.4" cy="209.7" r="2.0" fill="#14146e"/><circle cx="778.9" cy="220.5" r="2.0" fill="#14146e"/>
<polyline points="768.2,166.6 768.8,181.0 768.8,191.0 757.0,204.9 748.6,214.9 746.0,220.0" fill="none" stroke="#14146e" stroke-width="1.0" shape-rendering="crispEdges"/><circle cx="768.8" cy="181.0" r="2.0" fill="#14146e"/><circle cx="768.8" cy="191.0" r="2.0" fill="#14146e"/><circle cx="757.0" cy="204.9" r="2.0" fill="#14146e"/><circle cx="748.6" cy="214.9" r="2.0" fill="#14146e"/>
<polyline points="781.3,182.6 788.9,193.3 792.1,204.9 795.6,216.8 798.8,220.5 798.8,225.0" fill="none" stroke="#14146e" stroke-width="1.0" shape-rendering="crispEdges"/><circle cx="788.9" cy="193.3" r="2.0" fill="#14146e"/><circle cx="795.6" cy="216.8" r="2.0" fill="#14146e"/><circle cx="798.8" cy="220.5" r="2.0" fill="#14146e"/><circle cx="798.8" cy="225.0" r="2.0" fill="#14146e"/>
<polyline points="798.8,225.0 790.8,237.9 785.7,260.1 817.9,269.8 830.7,273.8 837.0,282.9 829.1,288.9" fill="none" stroke="#14146e" stroke-width="1.0" shape-rendering="crispEdges"/><circle cx="790.8" cy="237.9" r="2.0" fill="#14146e"/><circle cx="785.7" cy="260.1" r="2.0" fill="#14146e"/><circle cx="817.9" cy="269.8" r="2.0" fill="#14146e"/><circle cx="830.7" cy="273.8" r="2.0" fill="#14146e"/><circle cx="837.0" cy="282.9" r="2.0" fill="#14146e"/><circle cx="829.1" cy="288.9" r="2.0" fill="#14146e"/>
<polyline points="795.6,216.8 784.0,239.4 766.9,255.4 776.0,279.7 779.7,289.5 771.7,297.5 762.5,303.0" fill="none" stroke="#14146e" stroke-width="1.0" shape-rendering="crispEdges"/><circle cx="784.0" cy="239.4" r="2.0" fill="#14146e"/><circle cx="766.9" cy="255.4" r="2.0" fill="#14146e"/><circle cx="776.0" cy="279.7" r="2.0" fill="#14146e"/><circle cx="779.7" cy="289.5" r="2.0" fill="#14146e"/><circle cx="771.7" cy="297.5" r="2.0" fill="#14146e"/><circle cx="762.5" cy="303.0" r="2.0" fill="#14146e"/>
<circle cx="774.0" cy="173.0" r="1.9" fill="#14146e"/><circle cx="778.5" cy="179.0" r="1.9" fill="#14146e"/><circle cx="770.0" cy="168.5" r="1.9" fill="#14146e"/>
<ellipse cx="744.2" cy="226.2" rx="4.8" ry="8.4" fill="#14146e" transform="rotate(18 744.2 226.2)"/><circle cx="748.4" cy="227.5" r="1.7" fill="#14146e"/><circle cx="747.1" cy="230.2" r="1.7" fill="#14146e"/><circle cx="746.4" cy="231.4" r="1.7" fill="#14146e"/><circle cx="745.5" cy="232.3" r="1.7" fill="#14146e"/><circle cx="743.6" cy="233.8" r="1.7" fill="#14146e"/><circle cx="742.9" cy="233.3" r="1.7" fill="#14146e"/><circle cx="741.5" cy="233.8" r="1.7" fill="#14146e"/><circle cx="740.6" cy="231.5" r="1.7" fill="#14146e"/><circle cx="739.1" cy="230.5" r="1.7" fill="#14146e"/><circle cx="739.3" cy="228.8" r="1.7" fill="#14146e"/><circle cx="739.9" cy="227.4" r="1.7" fill="#14146e"/><circle cx="740.4" cy="224.9" r="1.7" fill="#14146e"/><circle cx="740.8" cy="223.5" r="1.7" fill="#14146e"/><circle cx="741.5" cy="221.8" r="1.7" fill="#14146e"/><circle cx="743.1" cy="219.4" r="1.7" fill="#14146e"/><circle cx="744.7" cy="218.8" r="1.7" fill="#14146e"/><circle cx="746.0" cy="218.6" r="1.7" fill="#14146e"/><circle cx="747.0" cy="219.5" r="1.7" fill="#14146e"/><circle cx="748.8" cy="220.2" r="1.7" fill="#14146e"/><circle cx="749.0" cy="221.9" r="1.7" fill="#14146e"/><circle cx="748.7" cy="223.3" r="1.7" fill="#14146e"/><circle cx="748.5" cy="225.2" r="1.7" fill="#14146e"/><rect x="744.6" y="222.8" width="1.4" height="1.4" fill="#5d5d5d" opacity="0.8"/><rect x="745.2" y="223.6" width="1.4" height="1.4" fill="#5d5d5d" opacity="0.8"/><rect x="746.9" y="225.2" width="1.4" height="1.4" fill="#5d5d5d" opacity="0.8"/><rect x="744.7" y="225.9" width="1.4" height="1.4" fill="#5d5d5d" opacity="0.8"/><rect x="745.7" y="224.4" width="1.4" height="1.4" fill="#5d5d5d" opacity="0.8"/><rect x="745.3" y="225.7" width="1.4" height="1.4" fill="#5d5d5d" opacity="0.8"/><rect x="745.1" y="227.9" width="1.4" height="1.4" fill="#5d5d5d" opacity="0.8"/><rect x="744.4" y="223.4" width="1.4" height="1.4" fill="#5d5d5d" opacity="0.8"/><rect x="744.4" y="227.2" width="1.4" height="1.4" fill="#5d5d5d" opacity="0.8"/>
<ellipse cx="769.6" cy="231.2" rx="7.6" ry="4.4" fill="#14146e" transform="rotate(-33 769.6 231.2)"/><circle cx="775.6" cy="227.3" r="1.7" fill="#14146e"/><circle cx="775.4" cy="228.9" r="1.7" fill="#14146e"/><circle cx="775.6" cy="229.3" r="1.7" fill="#14146e"/><circle cx="775.5" cy="231.0" r="1.7" fill="#14146e"/><circle cx="773.9" cy="232.9" r="1.7" fill="#14146e"/><circle cx="772.6" cy="234.1" r="1.7" fill="#14146e"/><circle cx="771.4" cy="234.7" r="1.7" fill="#14146e"/><circle cx="769.7" cy="236.0" r="1.7" fill="#14146e"/><circle cx="768.0" cy="236.4" r="1.7" fill="#14146e"/><circle cx="766.3" cy="236.4" r="1.7" fill="#14146e"/><circle cx="764.9" cy="235.8" r="1.7" fill="#14146e"/><circle cx="764.2" cy="234.3" r="1.7" fill="#14146e"/><circle cx="763.0" cy="234.6" r="1.7" fill="#14146e"/><circle cx="764.0" cy="232.4" r="1.7" fill="#14146e"/><circle cx="764.1" cy="230.5" r="1.7" fill="#14146e"/><circle cx="764.9" cy="230.2" r="1.7" fill="#14146e"/><circle cx="766.3" cy="228.9" r="1.7" fill="#14146e"/><circle cx="768.5" cy="227.5" r="1.7" fill="#14146e"/><circle cx="770.3" cy="226.9" r="1.7" fill="#14146e"/><circle cx="771.4" cy="226.0" r="1.7" fill="#14146e"/><circle cx="773.1" cy="226.3" r="1.7" fill="#14146e"/><circle cx="774.6" cy="226.7" r="1.7" fill="#14146e"/><rect x="768.5" y="231.3" width="1.4" height="1.4" fill="#5d5d5d" opacity="0.8"/><rect x="766.4" y="228.1" width="1.4" height="1.4" fill="#5d5d5d" opacity="0.8"/><rect x="771.9" y="228.1" width="1.4" height="1.4" fill="#5d5d5d" opacity="0.8"/><rect x="768.3" y="232.4" width="1.4" height="1.4" fill="#5d5d5d" opacity="0.8"/><rect x="766.4" y="229.3" width="1.4" height="1.4" fill="#5d5d5d" opacity="0.8"/><rect x="770.6" y="230.4" width="1.4" height="1.4" fill="#5d5d5d" opacity="0.8"/><rect x="768.0" y="232.9" width="1.4" height="1.4" fill="#5d5d5d" opacity="0.8"/><rect x="768.9" y="228.3" width="1.4" height="1.4" fill="#5d5d5d" opacity="0.8"/><rect x="773.0" y="228.4" width="1.4" height="1.4" fill="#5d5d5d" opacity="0.8"/>
<path d="M763.6,224 Q766.5,219.8 774.6,222" fill="none" stroke="#14146e" stroke-width="3.2" stroke-linecap="round"/>
<path d="M652,119 L648.2,123 L648.3,124.8 L654,124.9 L659,124.3 L666,122 L672,118 L675,114.6 L673,113.7 L680,112.5 L685.8,112.3 L690.6,115.5 L691.8,121.9 L690.4,129 L688.3,136.3 L683,143.5 L677,148.3 L670.5,150.8 L666,150.5 L661,146 L659.4,140 L659,134.7 L661.5,130.5" fill="none" stroke="#cc00cc" stroke-width="1" shape-rendering="crispEdges"/>
<path d="M688.3,136.3 L697,142 L705.8,147.5 L704.8,144.3 L702,145.2" fill="none" stroke="#cc00cc" stroke-width="1" shape-rendering="crispEdges"/>
<path d="M667.3,126 l1.8,3.4 M670.3,125 l0.6,0.8" fill="none" stroke="#cc00cc" stroke-width="1" shape-rendering="crispEdges"/>
<path d="M676.2,160 l0.8,0.6 m2.4,-0.6 l0.8,0.6 m-2.2,1.4 l0.8,0.6 m-2.8,1.4 l1.2,0.8 m-0.8,1.4 l0.8,0.6" fill="none" stroke="#cc00cc" stroke-width="1" shape-rendering="crispEdges"/>
<path d="M732.2,164.6 H744.8 L735.3,174.5 L737.7,176.9 L720.2,178.6 L722.6,179.8" fill="none" stroke="#cc00cc" stroke-width="1" shape-rendering="crispEdges" stroke-width="1.1"/>
<path d="M731,178.9 L721.8,189 H701.9 V188.5 H688.3 L695.9,181.3 M695.1,175.3 l3.6,3.6" fill="none" stroke="#cc00cc" stroke-width="1" shape-rendering="crispEdges" stroke-width="1.1"/>
<path d="M636.4,158.3 L639.6,161 L641,166 L640,170.5 L637,172.8 L634.6,171.6 L632.2,166 L633,161 Z" fill="none" stroke="#cc00cc" stroke-width="1" shape-rendering="crispEdges"/>
<path d="M632,166.4 h2 m2,-0.8 h2.4 m-2.2,2.6 h2" fill="none" stroke="#cc00cc" stroke-width="1" shape-rendering="crispEdges"/>
<ellipse cx="655.5" cy="177.7" rx="7.5" ry="7.9" fill="none" stroke="#cc00cc" stroke-width="1" shape-rendering="crispEdges"/>
<path d="M685.1999999999999,224.70000000000002 l5.4,1.2 M687.5,222.5 l0.8,5.6" fill="none" stroke="#cc00cc" stroke-width="1" shape-rendering="crispEdges"/>
<path d="M722.4,231.6 l5.4,1.2 M724.7,229.39999999999998 l0.8,5.6" fill="none" stroke="#cc00cc" stroke-width="1" shape-rendering="crispEdges"/>
<path d="M691.5,271 L688.1,272.3 L685.5,275.5 L684.3,278.9 L688.1,282.1 L692.9,284.5 L700.9,284.2 L706.4,280.5 L708,275.7 L706.8,272.8 L704.8,271.3" fill="none" stroke="#cc00cc" stroke-width="1" shape-rendering="crispEdges"/>
<path d="M684.3,278.9 l1.6,-2 l1,3.6 z M687.5,281.5 L689.2,287 L689.4,293.3 L688,290.5 L689.6,290.8" fill="none" stroke="#cc00cc" stroke-width="1" shape-rendering="crispEdges"/>
<path d="M696.2,264.5 h1.6 M697,277.5 h0.8" fill="none" stroke="#cc00cc" stroke-width="1" shape-rendering="crispEdges"/>
<circle cx="729.9" cy="294" r="7.6" fill="none" stroke="#cc00cc" stroke-width="1" shape-rendering="crispEdges"/>
<path d="M720.4,285.3 L725.6,282.6 L731,281.8 L736.7,281 L742.7,280.4 L741.2,281.9 L736.7,283.4 L728.7,285.7 L723.2,286.2 Z M737.5,280.6 l1.5,2" fill="none" stroke="#cc00cc" stroke-width="1" shape-rendering="crispEdges"/>
<path d="M608.3,168.0 L610.0,168.2 L611.8,167.2 L613.5,167.6 L615.2,166.8 L616.9,167.3 L618.6,166.4 L620.4,167.4 L622.1,167.0 L623.8,167.8 L625.5,167.1 L627.3,167.7 L629.0,166.9 L629.0,170.1 L627.3,171.5 L625.5,170.4 L623.8,171.4 L622.1,171.0 L620.4,172.6 L618.6,171.6 L616.9,172.5 L615.2,172.0 L613.5,173.2 L611.8,172.0 L610.0,172.9 L608.3,171.7Z" fill="#cc00cc"/>
<path d="M613.3,161.7 L615.1,162.1 L616.9,161.3 L618.6,162.5 L620.4,161.9 L622.2,163.5 L624.0,163.0 L624.0,165.5 L622.2,166.5 L620.4,165.4 L618.6,166.4 L616.9,165.4 L615.1,166.2 L613.3,164.5Z" fill="#cc00cc"/>
<path d="M640.4,177.8 L642.0,178.3 L643.6,177.0 L645.3,177.8 L646.9,176.7 L648.5,177.8 L650.1,177.0 L651.7,178.2 L653.4,177.7 L655.0,178.4 L656.6,177.3 L656.6,181.1 L655.0,181.7 L653.4,181.2 L651.7,182.7 L650.1,182.1 L648.5,183.7 L646.9,182.7 L645.3,183.4 L643.6,182.7 L642.0,183.2 L640.4,182.2Z" fill="#cc00cc"/>
<path d="M655.6,169.2 L657.3,170.2 L658.9,169.9 L660.6,171.9 L660.6,174.5 L658.9,173.4 L657.3,174.6 L655.6,172.4Z" fill="#cc00cc"/>
<polygon points="605.6,269.2 623.2,262 641,269.2 623.2,276.4" fill="#4a4a4a"/>
<rect x="622" y="268" width="2" height="1" fill="#0a7a1a"/>
<path d="M27.5,375 V388" stroke="#00ee00" stroke-width="1" shape-rendering="crispEdges"/>
<path d="M27.5,387.5 L18.5,384.2" stroke="#0000ff" stroke-width="1.2"/>
<path d="M26,388.3 L20,389.8" stroke="#ff0000" stroke-width="1.2"/>
<text x="24.9" y="370.4" font-family="DejaVu Sans, Liberation Sans, sans-serif" font-size="9" font-weight="bold" fill="#1ee01e">y</text>
<text x="14.4" y="381.9" font-family="DejaVu Sans, Liberation Sans, sans-serif" font-size="9" font-weight="bold" fill="#0000ff">z</text>
<text x="13.3" y="389" font-family="DejaVu Sans, Liberation Sans, sans-serif" font-size="9" font-weight="bold" fill="#ee1111">x</text>
<text x="691.2" y="275.1" font-family="Liberation Sans, DejaVu Sans, sans-serif" font-size="10" font-weight="bold" fill="#000080" textLength="11.2" lengthAdjust="spacingAndGlyphs">TR</text>
<text x="725.2" y="281.1" font-family="Liberation Sans, DejaVu Sans, sans-serif" font-size="10" font-weight="bold" fill="#000080" textLength="11.4" lengthAdjust="spacingAndGlyphs">TR</text>
<path d="M413.4,145.4 L413.4,161.7 L416.9,158.5 L420.5,166.3 L423.7,164.9 L420.3,157.1 L424.7,156.6 Z" fill="#fff" stroke="#000" stroke-width="0.9" stroke-linejoin="miter"/>
</svg>
<span class="abs" style="left:615.8px;top:395px;font-family:'DejaVu Sans','Liberation Sans',sans-serif;font-size:9px;font-weight:bold;line-height:13px;letter-spacing:-0.1px;color:#ffffff;white-space:nowrap;opacity:0.93;">persp</span>
<div id="gap" class="abs"></div>
<div id="handle" class="abs"></div>
<div id="tabbar" class="abs"></div>
<div id="tab1" class="abs tab"></div>
<div id="tab2" class="abs tab"></div>
<span class="abs" style="left:10.7px;top:428px;font-family:'DejaVu Sans Condensed','DejaVu Sans','Liberation Sans',sans-serif;font-size:11px;font-weight:normal;line-height:13px;letter-spacing:-0.08px;color:#9a9a9a;white-space:nowrap;">Time Editor</span>
<span class="abs" style="left:91.5px;top:428px;font-family:'DejaVu Sans Condensed','DejaVu Sans','Liberation Sans',sans-serif;font-size:11px;font-weight:normal;line-height:13px;letter-spacing:0.01px;color:#eeeeee;white-space:nowrap;">Trax Editor</span>
<div id="menubar" class="abs"></div>
<span class="abs" style="left:9.3px;top:446px;font-family:'DejaVu Sans','Liberation Sans',sans-serif;font-size:11px;font-weight:normal;line-height:13px;letter-spacing:-0.25px;color:#d2d2d2;white-space:nowrap;">File</span><span class="abs" style="left:42.4px;top:446px;font-family:'DejaVu Sans Condensed','DejaVu Sans','Liberation Sans',sans-serif;font-size:11px;font-weight:normal;line-height:13px;letter-spacing:0.08px;color:#d2d2d2;white-space:nowrap;">Edit</span><span class="abs" style="left:76.6px;top:446px;font-family:'DejaVu Sans','Liberation Sans',sans-serif;font-size:11px;font-weight:normal;line-height:13px;letter-spacing:-0.0px;color:#d2d2d2;white-space:nowrap;">View</span><span class="abs" style="left:116.8px;top:446px;font-family:'DejaVu Sans','Liberation Sans',sans-serif;font-size:11px;font-weight:normal;line-height:13px;letter-spacing:0.0px;color:#d2d2d2;white-space:nowrap;">Modify</span><span class="abs" style="left:168.2px;top:446px;font-family:'DejaVu Sans Condensed','DejaVu Sans','Liberation Sans',sans-serif;font-size:11px;font-weight:normal;line-height:13px;letter-spacing:0.1px;color:#d2d2d2;white-space:nowrap;">Create</span><span class="abs" style="left:216.4px;top:446px;font-family:'DejaVu Sans Condensed','DejaVu Sans','Liberation Sans',sans-serif;font-size:11px;font-weight:normal;line-height:13px;letter-spacing:0.03px;color:#d2d2d2;white-space:nowrap;">Library</span><span class="abs" style="left:266.2px;top:446px;font-family:'DejaVu Sans Condensed','DejaVu Sans','Liberation Sans',sans-serif;font-size:11px;font-weight:normal;line-height:13px;letter-spacing:-0.23px;color:#d2d2d2;white-space:nowrap;">List</span><span class="abs" style="left:298.0px;top:446px;font-family:'DejaVu Sans','Liberation Sans',sans-serif;font-size:11px;font-weight:normal;line-height:13px;letter-spacing:-0.3px;color:#d2d2d2;white-space:nowrap;">Help</span>
<div id="toolbar" class="abs"></div>
<svg class="abs" style="left:0;top:462px" width="400" height="27" viewBox="0 462 400 27">
<rect x="56" y="463" width="1.2" height="25" fill="#2a2a2a"/>
<rect x="87" y="463" width="1.2" height="25" fill="#2a2a2a"/>
<rect x="172" y="463" width="1.2" height="25" fill="#2a2a2a"/>
<rect x="203" y="463" width="1.2" height="25" fill="#2a2a2a"/>
<rect x="6" y="471" width="16.2" height="8.2" rx="1.6" fill="#e0703c" stroke="#353535" stroke-width="0.6"/>
<path d="M36.4,469.9 a3.4,2.3 0 0 0 0,4.6 z" fill="#c6c6c6"/>
<path d="M46,475.8 a3.4,2.3 0 0 1 0,4.6 z" fill="#c6c6c6"/>
<rect x="37.4" y="468.3" width="7.6" height="13.4" fill="#3a3a3a" stroke="#e0703c" stroke-width="1"/>
<path d="M39.6,469.9 h1.2 a2.2,2.2 0 0 1 0,4.4 h-1.2 z" fill="#e0703c"/>
<path d="M42.8,475.6 h-0.6 a2.3,2.3 0 0 0 0,4.6 h0.6 z" fill="#e0703c"/>
<path d="M66,471 H70.8 V474.6 H80.5 V477.2 a2,2 0 0 1 -2,2 H66 a2,2 0 0 1 -2,-2 V473 a2,2 0 0 1 2,-2 z" fill="#e0703c" stroke="#353535" stroke-width="0.5"/>
<path d="M71.6,471.6 V473.4 H79.8 V471.6" fill="none" stroke="#c6c6c6" stroke-width="1.1"/>
<path d="M74.2,465.6 h3 v2.9 h1.9 l-3.4,3.4 l-3.4,-3.4 h1.9 z" fill="#c6c6c6"/>
<path d="M73,472.3 h1.6 M76.6,472.3 h1.6" stroke="#e0703c" stroke-width="0.8"/>
<rect x="95.6" y="468.6" width="15" height="12.9" fill="none" stroke="#e0703c" stroke-width="1.2"/>
<path d="M124.6,468.6 H122.5 V481.4 H124.6 M135.4,468.6 H137.5 V481.4 H135.4" fill="none" stroke="#c6c6c6" stroke-width="1.1"/>
<rect x="126.5" y="468.6" width="7" height="12.9" fill="none" stroke="#e0703c" stroke-width="1.2"/>
<rect x="149.6" y="468.6" width="15" height="12.9" fill="none" stroke="#c6c6c6" stroke-width="1.1"/>
<rect x="156" y="466" width="2" height="18" fill="#a85a38"/>
<path d="M182.5,468 V480.8 H195.2" fill="none" stroke="#c6c6c6" stroke-width="1.1"/>
<path d="M180.9,480.8 l1.6,1.2" stroke="#c6c6c6" stroke-width="1"/>
<path d="M186.4,469.2 C187.6,473 188.4,476.4 190.6,476.2 C192.6,476 193.6,473.6 194.9,471" fill="none" stroke="#e0703c" stroke-width="1.1"/>
<circle cx="190.6" cy="472.2" r="0.9" fill="#999"/><circle cx="186.6" cy="474.6" r="0.6" fill="#999"/><circle cx="194.6" cy="475.8" r="0.7" fill="#999"/>
<circle cx="216" cy="469.8" r="2.1" fill="#e0703c"/>
<path d="M211,473 H219 V483 H217.1 V478.4 H215.9 V483 H214 V475.2 H211 Z" fill="#e0703c"/>
<path d="M221,467 h3 v2.4 h1.9 l-3.4,3.2 l-3.4,-3.2 h1.9 z" fill="#c6c6c6"/>
<path d="M218.6,472.6 V474.6 H226.6 V472.6" fill="none" stroke="#c6c6c6" stroke-width="1.1"/>
<path d="M240,471 H243 C242.3,473 242,476 241.2,479 H240 a2,2 0 0 1 -2,-2 V473 a2,2 0 0 1 2,-2 z" fill="#c6c6c6"/>
<path d="M244.6,471 H248 C248.8,473.6 250,475.6 252.4,475.4 C253,473.5 253,471.5 252,471 a2,2 0 0 1 2,2 V477 a2,2 0 0 1 -2,2 H243 C243.8,476 244,473 244.6,471 z" fill="#c6c6c6"/>
<path d="M238.2,481.6 C242.4,480.4 241.6,468.6 246,468.4 C249.4,468.4 249.2,474.8 252.6,474.6" fill="none" stroke="#e0703c" stroke-width="1.1"/>
<rect x="265" y="468" width="16.2" height="4.2" rx="0.8" fill="#e0703c"/>
<rect x="265" y="477" width="7.4" height="3.6" rx="0.8" fill="#c6c6c6"/>
<rect x="274" y="479.4" width="7.2" height="3.6" rx="0.8" fill="#c6c6c6"/>
<path d="M273.7,470 l4.3,5.8 h-2.2 v4.4 h-4.2 v-4.4 h-2.2 z" fill="#c6c6c6" stroke="#444" stroke-width="0.8"/>
<rect x="291" y="468" width="16.2" height="4.2" rx="0.8" fill="#c6c6c6"/>
<rect x="291" y="477" width="8.6" height="3.8" rx="0.8" fill="#e0703c"/>
<rect x="300" y="479.2" width="7.2" height="3.8" rx="0.8" fill="#e0703c"/>
<path d="M297.8,471 h4.2 v4.2 h2 l-4.1,5.4 l-4.1,-5.4 h2 z" fill="#c6c6c6" stroke="#444" stroke-width="0.8"/>
<path d="M321,471 H323.4 V479.2 H321 a2,2 0 0 1 -2,-2 V473 a2,2 0 0 1 2,-2 z" fill="#c6c6c6"/>
<path d="M325.8,471 H333.4 a2,2 0 0 1 2,2 V477.2 a2,2 0 0 1 -2,2 H325.8 z" fill="#e0703c"/>
<path d="M324.5,467.8 V482.2" stroke="#e0703c" stroke-width="1.5" stroke-dasharray="3.3,0.9"/>
<path d="M354.2,471 H348 a2,2 0 0 0 -2,2 V477.2 a2,2 0 0 0 2,2 H354.2 z" fill="#e0703c"/>
<path d="M356.8,471 H360.2 a2,2 0 0 1 2,2 V477.2 a2,2 0 0 1 -2,2 H356.8 z" fill="#c6c6c6"/>
<path d="M355.5,467.8 V482.2" stroke="#e0703c" stroke-width="1.5" stroke-dasharray="3.3,0.9"/>
<rect x="373" y="474" width="16.2" height="1" fill="#e8e8e8"/>
<rect x="379" y="466.8" width="4" height="16.4" rx="0.6" fill="#e0703c" stroke="#444" stroke-width="0.6"/>
</svg>
<div id="trax" class="abs"></div>
<svg width="0" height="0" style="position:absolute"><defs>
<linearGradient id="gLock" x1="0" y1="0" x2="0" y2="1"><stop offset="0" stop-color="#e2c22e"/><stop offset="0.5" stop-color="#c29d10"/><stop offset="1" stop-color="#8e7203"/></linearGradient>
<linearGradient id="gYel" x1="0" y1="0" x2="0" y2="1"><stop offset="0" stop-color="#e6d63c"/><stop offset="0.7" stop-color="#d4c224"/><stop offset="1" stop-color="#a89a10"/></linearGradient>
<linearGradient id="gBlu" x1="0" y1="0" x2="0" y2="1"><stop offset="0" stop-color="#9cd4f6"/><stop offset="1" stop-color="#4f96c8"/></linearGradient>
<linearGradient id="gArrU" x1="0" y1="0" x2="0" y2="1"><stop offset="0" stop-color="#696969"/><stop offset="0.5" stop-color="#545454"/><stop offset="1" stop-color="#686868"/></linearGradient>
<linearGradient id="gArrD" x1="0" y1="0" x2="0" y2="1"><stop offset="0" stop-color="#6a6a6a"/><stop offset="0.45" stop-color="#555"/><stop offset="1" stop-color="#686868"/></linearGradient>
<linearGradient id="gStU" gradientUnits="userSpaceOnUse" x1="0" y1="3" x2="0" y2="16"><stop offset="0" stop-color="#1c1c1c"/><stop offset="0.55" stop-color="#262626"/><stop offset="1" stop-color="#5e5e5e"/></linearGradient>
<linearGradient id="gStD" gradientUnits="userSpaceOnUse" x1="0" y1="3" x2="0" y2="16"><stop offset="0" stop-color="#606060"/><stop offset="0.45" stop-color="#282828"/><stop offset="1" stop-color="#1c1c1c"/></linearGradient>
</defs></svg>
<div class="abs" style="left:0;top:489px;width:1px;height:139px;background:#4a4a4a"></div>
<div class="abs" style="left:1px;top:488px;width:97px;height:16px;background:#535353"></div>
<div class="abs" style="left:96px;top:489px;width:5px;height:139px;background:#474747"></div>
<div class="abs" style="left:98px;top:489px;width:1px;height:139px;background:#fff"></div>
<div class="abs" style="left:101px;top:489px;width:966px;height:15px;background:#6fa3cc"></div>
<div class="abs" style="left:101px;top:504px;width:202px;height:40px;background:#6fa3cc;box-sizing:border-box;border-bottom:1px solid #41719e"></div>
<div class="abs" style="left:101px;top:505px;width:202px;height:1px;background:#a8d2ef"></div>
<div class="abs" style="left:301px;top:506px;width:1px;height:38px;background:#41719e"></div>
<svg class="abs" style="left:103px;top:492px" width="14" height="10" viewBox="103 492 14 10"><polygon points="104.6,494 114.3,494 110.3,500.2 108.7,500.2" fill="#000"/></svg>
<span class="abs" style="left:116.3px;top:491px;font-family:'DejaVu Sans Condensed','DejaVu Sans','Liberation Sans',sans-serif;font-size:9.5px;font-weight:normal;line-height:13px;letter-spacing:0.19px;color:#ffffff;white-space:nowrap;">HIK_Rig</span>
<span class="abs" style="left:287.4px;top:510px;font-family:'DejaVu Sans Condensed','DejaVu Sans','Liberation Sans',sans-serif;font-size:9.5px;font-weight:normal;line-height:13px;letter-spacing:-0.1px;color:#0a0a12;white-space:nowrap;">48</span>
<span class="abs" style="left:287.4px;top:531px;font-family:'DejaVu Sans Condensed','DejaVu Sans','Liberation Sans',sans-serif;font-size:9.5px;font-weight:normal;line-height:13px;letter-spacing:-0.1px;color:#0a0a12;white-space:nowrap;">48</span>
<div class="abs" style="left:202px;top:544px;width:865px;height:40px;background:#ffff80;box-sizing:border-box;border-bottom:1px solid #3e6a92"></div>
<div class="abs" style="left:202px;top:545px;width:865px;height:1px;background:#a9d4f2"></div>
<div class="abs" style="left:202px;top:545px;width:1px;height:38px;background:#a9d4f2"></div>
<span class="abs" style="left:206.2px;top:550px;font-family:'DejaVu Sans Condensed','DejaVu Sans','Liberation Sans',sans-serif;font-size:9.5px;font-weight:normal;line-height:13px;letter-spacing:0px;color:#121200;white-space:nowrap;">1</span>
<span class="abs" style="left:205.6px;top:571px;font-family:'DejaVu Sans Condensed','DejaVu Sans','Liberation Sans',sans-serif;font-size:9.5px;font-weight:normal;line-height:13px;letter-spacing:-0.4px;color:#121200;white-space:nowrap;">46</span>
<div class="abs" style="left:101px;top:544px;width:101px;height:40px;background:#7a7a7a"></div>
<div class="abs" style="left:101px;top:624px;width:966px;height:4px;background:#7a7a7a"></div>
<div class="abs" style="left:252px;top:489px;width:1px;height:139px;background:#f00010"></div>
<div class="abs btn" style="left:2px;top:527px;width:18px"></div>
<div class="abs btn" style="left:22px;top:527px;width:19px"></div>
<div class="abs btn" style="left:41px;top:527px;width:18px"></div>
<div class="abs btn" style="left:61px;top:527px;width:18px"></div>
<div class="abs btn" style="left:80px;top:527px;width:16px"></div>
<svg class="abs" style="left:0;top:527px" width="97" height="17" viewBox="0 0 97 17">
<path d="M8.3,9.5 V7.2 a3,3.3 0 0 1 6,0 V9.5" fill="none" stroke="#c9a412" stroke-width="1.7"/>
<path d="M8.3,9.5 V7.2 a3,3.3 0 0 1 6,0 V9.5" fill="none" stroke="#3a2e00" stroke-width="2.6" opacity="0.35"/>
<path d="M8.3,9.5 V7.2 a3,3.3 0 0 1 6,0 V9.5" fill="none" stroke="#d8b824" stroke-width="1.2"/>
<rect x="6.3" y="9.4" width="10.2" height="6.8" rx="1" fill="url(#gLock)" stroke="#4a3a00" stroke-width="0.8"/>
<ellipse cx="11.4" cy="12.9" rx="0.8" ry="1.4" fill="#111"/>
<path d="M24.5,3.8 h4.5 M31,3.8 h6 M24.5,15 h7.5 M34,15 h4" stroke="#8c8c8c" stroke-width="2"/>
<rect x="23" y="6" width="15.2" height="7.2" fill="#fff"/>
<rect x="24.6" y="7.2" width="12.4" height="5" fill="url(#gYel)"/>
<rect x="44" y="2.6" width="4.6" height="3.6" fill="url(#gBlu)"/><rect x="50.4" y="2.6" width="6.6" height="3.6" fill="url(#gBlu)"/>
<rect x="44" y="13" width="7" height="3.4" fill="url(#gBlu)"/><rect x="53" y="13" width="4" height="3.4" fill="url(#gBlu)"/>
<rect x="44" y="7.6" width="13" height="4" fill="#999"/>
<circle cx="50.4" cy="9.6" r="4.1" fill="#8a8a8a" fill-opacity="0.6" stroke="#e0161e" stroke-width="1.15"/>
<path d="M47.6,12.4 L53.2,6.8" stroke="#e0161e" stroke-width="1.15"/>
<path d="M69.5,3.2 L76,9.6 H72.7 V15.6 H66.3 V9.6 H63 Z" fill="url(#gArrU)"/>
<path d="M66.3,15.6 V9.6 H63 L69.5,3.2 L76,9.6 H72.7 V15.6" fill="none" stroke="url(#gStU)" stroke-width="0.9"/>
<path d="M89.5,16 L96,9.6 H92.7 V3 H86.3 V9.6 H83 Z" fill="url(#gArrD)"/>
<path d="M86.3,3 V9.6 H83 L89.5,16 L96,9.6 H92.7 V3" fill="none" stroke="url(#gStD)" stroke-width="0.9"/>
</svg>
<div class="abs btn" style="left:2px;top:567px;width:18px"></div>
<div class="abs btn" style="left:22px;top:567px;width:19px"></div>
<div class="abs btn" style="left:41px;top:567px;width:18px"></div>
<div class="abs btn" style="left:61px;top:567px;width:18px"></div>
<div class="abs btn" style="left:80px;top:567px;width:16px"></div>
<svg class="abs" style="left:0;top:567px" width="97" height="17" viewBox="0 0 97 17">
<path d="M8.3,9.5 V7.2 a3,3.3 0 0 1 6,0 V9.5" fill="none" stroke="#c9a412" stroke-width="1.7"/>
<path d="M8.3,9.5 V7.2 a3,3.3 0 0 1 6,0 V9.5" fill="none" stroke="#3a2e00" stroke-width="2.6" opacity="0.35"/>
<path d="M8.3,9.5 V7.2 a3,3.3 0 0 1 6,0 V9.5" fill="none" stroke="#d8b824" stroke-width="1.2"/>
<rect x="6.3" y="9.4" width="10.2" height="6.8" rx="1" fill="url(#gLock)" stroke="#4a3a00" stroke-width="0.8"/>
<ellipse cx="11.4" cy="12.9" rx="0.8" ry="1.4" fill="#111"/>
<path d="M24.5,3.8 h4.5 M31,3.8 h6 M24.5,15 h7.5 M34,15 h4" stroke="#8c8c8c" stroke-width="2"/>
<rect x="23" y="6" width="15.2" height="7.2" fill="#fff"/>
<rect x="24.6" y="7.2" width="12.4" height="5" fill="url(#gYel)"/>
<rect x="44" y="2.6" width="4.6" height="3.6" fill="url(#gBlu)"/><rect x="50.4" y="2.6" width="6.6" height="3.6" fill="url(#gBlu)"/>
<rect x="44" y="13" width="7" height="3.4" fill="url(#gBlu)"/><rect x="53" y="13" width="4" height="3.4" fill="url(#gBlu)"/>
<rect x="44" y="7.6" width="13" height="4" fill="#999"/>
<circle cx="50.4" cy="9.6" r="4.1" fill="#8a8a8a" fill-opacity="0.6" stroke="#e0161e" stroke-width="1.15"/>
<path d="M47.6,12.4 L53.2,6.8" stroke="#e0161e" stroke-width="1.15"/>
<path d="M69.5,3.2 L76,9.6 H72.7 V15.6 H66.3 V9.6 H63 Z" fill="url(#gArrU)"/>
<path d="M66.3,15.6 V9.6 H63 L69.5,3.2 L76,9.6 H72.7 V15.6" fill="none" stroke="url(#gStU)" stroke-width="0.9"/>
<path d="M89.5,16 L96,9.6 H92.7 V3 H86.3 V9.6 H83 Z" fill="url(#gArrD)"/>
<path d="M86.3,3 V9.6 H83 L89.5,16 L96,9.6 H92.7 V3" fill="none" stroke="url(#gStD)" stroke-width="0.9"/>
</svg>
<div class="abs btn" style="left:2px;top:607px;width:18px"></div>
<div class="abs btn" style="left:22px;top:607px;width:19px"></div>
<div class="abs btn" style="left:41px;top:607px;width:18px"></div>
<div class="abs btn" style="left:61px;top:607px;width:18px"></div>
<div class="abs btn" style="left:80px;top:607px;width:16px"></div>
<svg class="abs" style="left:0;top:607px" width="97" height="17" viewBox="0 0 97 17">
<path d="M8.3,9.5 V7.2 a3,3.3 0 0 1 6,0 V9.5" fill="none" stroke="#c9a412" stroke-width="1.7"/>
<path d="M8.3,9.5 V7.2 a3,3.3 0 0 1 6,0 V9.5" fill="none" stroke="#3a2e00" stroke-width="2.6" opacity="0.35"/>
<path d="M8.3,9.5 V7.2 a3,3.3 0 0 1 6,0 V9.5" fill="none" stroke="#d8b824" stroke-width="1.2"/>
<rect x="6.3" y="9.4" width="10.2" height="6.8" rx="1" fill="url(#gLock)" stroke="#4a3a00" stroke-width="0.8"/>
<ellipse cx="11.4" cy="12.9" rx="0.8" ry="1.4" fill="#111"/>
<path d="M24.5,3.8 h4.5 M31,3.8 h6 M24.5,15 h7.5 M34,15 h4" stroke="#8c8c8c" stroke-width="2"/>
<rect x="23" y="6" width="15.2" height="7.2" fill="#fff"/>
<rect x="24.6" y="7.2" width="12.4" height="5" fill="url(#gYel)"/>
<rect x="44" y="2.6" width="4.6" height="3.6" fill="url(#gBlu)"/><rect x="50.4" y="2.6" width="6.6" height="3.6" fill="url(#gBlu)"/>
<rect x="44" y="13" width="7" height="3.4" fill="url(#gBlu)"/><rect x="53" y="13" width="4" height="3.4" fill="url(#gBlu)"/>
<rect x="44" y="7.6" width="13" height="4" fill="#999"/>
<circle cx="50.4" cy="9.6" r="4.1" fill="#8a8a8a" fill-opacity="0.6" stroke="#e0161e" stroke-width="1.15"/>
<path d="M47.6,12.4 L53.2,6.8" stroke="#e0161e" stroke-width="1.15"/>
<path d="M69.5,3.2 L76,9.6 H72.7 V15.6 H66.3 V9.6 H63 Z" fill="url(#gArrU)"/>
<path d="M66.3,15.6 V9.6 H63 L69.5,3.2 L76,9.6 H72.7 V15.6" fill="none" stroke="url(#gStU)" stroke-width="0.9"/>
<path d="M89.5,16 L96,9.6 H92.7 V3 H86.3 V9.6 H83 Z" fill="url(#gArrD)"/>
<path d="M86.3,3 V9.6 H83 L89.5,16 L96,9.6 H92.7 V3" fill="none" stroke="url(#gStD)" stroke-width="0.9"/>
</svg>
</body>
</html>
